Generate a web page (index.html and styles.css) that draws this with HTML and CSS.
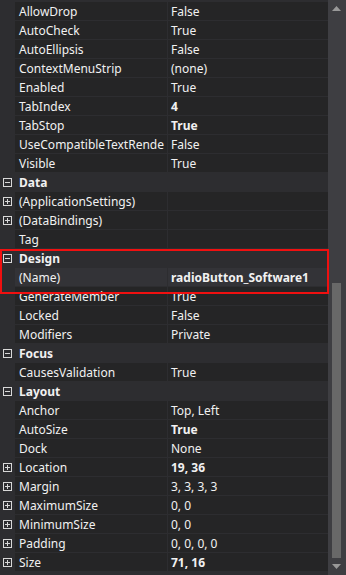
FILE: index.html
```html
<!DOCTYPE html>
<html lang="en">
  <head>
    <meta charset="UTF-8" />
    <meta name="viewport" content="width=device-width, initial-scale=1.0" />
    <title>Properties</title>
    <link rel="stylesheet" href="styles.css">
  </head>
  <body>
    <div class="panel">
      <div class="props">
        <div class="row"><span class="gutter"></span><span class="name">AllowDrop</span><span class="value">False</span></div>
        <div class="row"><span class="gutter"></span><span class="name">AutoCheck</span><span class="value">True</span></div>
        <div class="row"><span class="gutter"></span><span class="name">AutoEllipsis</span><span class="value">False</span></div>
        <div class="row"><span class="gutter"></span><span class="name">ContextMenuStrip</span><span class="value">(none)</span></div>
        <div class="row"><span class="gutter"></span><span class="name">Enabled</span><span class="value">True</span></div>
        <div class="row"><span class="gutter"></span><span class="name">TabIndex</span><span class="value bold">4</span></div>
        <div class="row"><span class="gutter"></span><span class="name">TabStop</span><span class="value bold">True</span></div>
        <div class="row"><span class="gutter"></span><span class="name">UseCompatibleTextRende</span><span class="value">False</span></div>
        <div class="row"><span class="gutter"></span><span class="name">Visible</span><span class="value">True</span></div>

        <div class="row cat">
          <span class="gutter"><svg class="toggle" width="9" height="9" viewBox="0 0 9 9"><rect x="0.5" y="0.5" width="8" height="8"/><path d="M2 4.5h5"/></svg></span>
          <span class="name">Data</span>
        </div>
        <div class="row">
          <span class="gutter"><svg class="toggle" width="9" height="9" viewBox="0 0 9 9"><rect x="0.5" y="0.5" width="8" height="8"/><path d="M2 4.5h5M4.5 2v5"/></svg></span>
          <span class="name">(ApplicationSettings)</span><span class="value"></span>
        </div>
        <div class="row">
          <span class="gutter"><svg class="toggle" width="9" height="9" viewBox="0 0 9 9"><rect x="0.5" y="0.5" width="8" height="8"/><path d="M2 4.5h5M4.5 2v5"/></svg></span>
          <span class="name">(DataBindings)</span><span class="value"></span>
        </div>
        <div class="row"><span class="gutter"></span><span class="name">Tag</span><span class="value"></span></div>

        <div class="marked">
          <div class="row cat">
            <span class="gutter"><svg class="toggle" width="9" height="9" viewBox="0 0 9 9"><rect x="0.5" y="0.5" width="8" height="8"/><path d="M2 4.5h5"/></svg></span>
            <span class="name">Design</span>
          </div>
          <div class="row selected"><span class="gutter"></span><span class="name">(Name)</span><span class="value bold">radioButton_Software1</span></div>
        </div>
        <div class="row"><span class="gutter"></span><span class="name">GenerateMember</span><span class="value">True</span></div>
        <div class="row"><span class="gutter"></span><span class="name">Locked</span><span class="value">False</span></div>
        <div class="row"><span class="gutter"></span><span class="name">Modifiers</span><span class="value">Private</span></div>

        <div class="row cat">
          <span class="gutter"><svg class="toggle" width="9" height="9" viewBox="0 0 9 9"><rect x="0.5" y="0.5" width="8" height="8"/><path d="M2 4.5h5"/></svg></span>
          <span class="name">Focus</span>
        </div>
        <div class="row"><span class="gutter"></span><span class="name">CausesValidation</span><span class="value">True</span></div>

        <div class="row cat">
          <span class="gutter"><svg class="toggle" width="9" height="9" viewBox="0 0 9 9"><rect x="0.5" y="0.5" width="8" height="8"/><path d="M2 4.5h5"/></svg></span>
          <span class="name">Layout</span>
        </div>
        <div class="row"><span class="gutter"></span><span class="name">Anchor</span><span class="value">Top, Left</span></div>
        <div class="row"><span class="gutter"></span><span class="name">AutoSize</span><span class="value bold">True</span></div>
        <div class="row"><span class="gutter"></span><span class="name">Dock</span><span class="value">None</span></div>
        <div class="row">
          <span class="gutter"><svg class="toggle" width="9" height="9" viewBox="0 0 9 9"><rect x="0.5" y="0.5" width="8" height="8"/><path d="M2 4.5h5M4.5 2v5"/></svg></span>
          <span class="name">Location</span><span class="value bold">19, 36</span>
        </div>
        <div class="row">
          <span class="gutter"><svg class="toggle" width="9" height="9" viewBox="0 0 9 9"><rect x="0.5" y="0.5" width="8" height="8"/><path d="M2 4.5h5M4.5 2v5"/></svg></span>
          <span class="name">Margin</span><span class="value">3, 3, 3, 3</span>
        </div>
        <div class="row">
          <span class="gutter"><svg class="toggle" width="9" height="9" viewBox="0 0 9 9"><rect x="0.5" y="0.5" width="8" height="8"/><path d="M2 4.5h5M4.5 2v5"/></svg></span>
          <span class="name">MaximumSize</span><span class="value">0, 0</span>
        </div>
        <div class="row">
          <span class="gutter"><svg class="toggle" width="9" height="9" viewBox="0 0 9 9"><rect x="0.5" y="0.5" width="8" height="8"/><path d="M2 4.5h5M4.5 2v5"/></svg></span>
          <span class="name">MinimumSize</span><span class="value">0, 0</span>
        </div>
        <div class="row">
          <span class="gutter"><svg class="toggle" width="9" height="9" viewBox="0 0 9 9"><rect x="0.5" y="0.5" width="8" height="8"/><path d="M2 4.5h5M4.5 2v5"/></svg></span>
          <span class="name">Padding</span><span class="value">0, 0, 0, 0</span>
        </div>
        <div class="row">
          <span class="gutter"><svg class="toggle" width="9" height="9" viewBox="0 0 9 9"><rect x="0.5" y="0.5" width="8" height="8"/><path d="M2 4.5h5M4.5 2v5"/></svg></span>
          <span class="name">Size</span><span class="value bold">71, 16</span>
        </div>
      </div>

      <!-- scrollbar -->
      <div class="scrollbar">
        <div class="sb-btn">
          <svg width="9" height="5" viewBox="0 0 9 5"><polygon points="4.5,0 9,5 0,5"/></svg>
        </div>
        <div class="sb-track">
          <div class="sb-thumb"></div>
        </div>
        <div class="sb-btn">
          <svg width="9" height="5" viewBox="0 0 9 5"><polygon points="0,0 9,0 4.5,5"/></svg>
        </div>
      </div>
    </div>
  </body>
</html>
```

FILE: styles.css
```css
*{
    padding: 0px;
    margin: 0px;
    box-sizing: border-box;
}
body{
    background-color: #2d2d30;
    font-family: "Noto Sans", "Liberation Sans", sans-serif;
    font-size: 12px;
    color: #f1f1f1;
}
.panel{
    display: flex;
    height: 575px;
}
.props{
    width: 328px;
    padding-top: 2px;
}
.row{
    display: grid;
    grid-template-columns: 15px 152px 1fr;
    height: 19px;
    border-bottom: 1px solid #2d2d30;
    line-height: 18px;
}
.gutter{
    display: flex;
    align-items: center;
    padding-left: 3px;
    padding-top: 1px;
}
.toggle{
    display: block;
}
.toggle rect{
    fill: none;
    stroke: #d8d8d8;
}
.toggle path{
    stroke: #d8d8d8;
}
.name{
    background-color: #252526;
    padding-left: 4px;
    padding-top: 1px;
    white-space: nowrap;
    overflow: hidden;
}
.value{
    background-color: #252526;
    border-left: 1px solid #2d2d30;
    padding-left: 3px;
    padding-top: 1px;
    white-space: nowrap;
    overflow: hidden;
}
.bold{
    font-weight: bold;
}
.cat .name{
    grid-column: 2 / 4;
    background-color: #2d2d30;
    font-weight: bold;
}
.selected .name,
.selected .value{
    background-color: #333337;
}

/* red highlight box */
.marked{
    position: relative;
}
.marked::after{
    content: "";
    position: absolute;
    left: 0px;
    top: 0px;
    width: 325px;
    height: 41px;
    border: 2px solid #f01010;
    pointer-events: none;
}

.scrollbar{
    width: 18px;
    background-color: #3e3e42;
    display: flex;
    flex-direction: column;
}
.sb-btn{
    height: 17px;
    display: flex;
    align-items: center;
    justify-content: center;
    padding-right: 1px;
}
.sb-btn svg{
    fill: #999999;
}
.sb-track{
    flex: 1;
    display: flex;
    flex-direction: column;
    justify-content: flex-end;
    padding: 0 5px 0 4px;
}
.sb-thumb{
    height: 275px;
    background-color: #686868;
}
```
